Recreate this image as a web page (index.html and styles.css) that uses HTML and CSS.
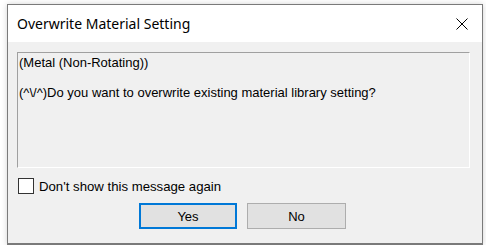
FILE: index.html
```html
<!DOCTYPE html>
<html>
<head>
<meta charset="utf-8" />
<title>Overwrite Material Setting</title>
<link rel="stylesheet" href="styles.css">
</head>
<body>

<div class="window">
  <div class="titlebar">
    <span class="title">Overwrite Material Setting</span>
    <svg class="close" width="12" height="12" viewBox="0 0 12 12">
      <path d="M0.5 0.5 L11.5 11.5 M11.5 0.5 L0.5 11.5" stroke="#000" stroke-width="1" fill="none" />
    </svg>
  </div>

  <div class="content">
    <div class="message">
      <p>(Metal (Non-Rotating))</p>
      <p>(^\/^)Do you want to overwrite existing material library setting?</p>
    </div>

    <label class="check">
      <span class="box"></span>
      <span>Don't show this message again</span>
    </label>

    <div class="buttons">
      <button class="btn default">Yes</button>
      <button class="btn">No</button>
    </div>
  </div>
</div>

</body>
</html>
```

FILE: styles.css
```css
body {
  margin: 0;
  padding: 4px 0 0 7px;
  background: #fff;
  font-family: "Liberation Sans", Arial, sans-serif;
}
.window {
  width: 474px;
  height: 238px;
  border: 1px solid #7a7a7a;
  border-bottom-width: 2px;
  box-shadow: 0 0 6px rgba(0,0,0,0.18);
  background: #f0f0f0;
  display: flex;
  flex-direction: column;
}
.titlebar {
  height: 37px;
  background: #fff;
  display: flex;
  align-items: center;
  padding: 0 0 0 9px;
}
.title {
  font-family: "Noto Sans", "Open Sans", sans-serif;
  font-size: 14px;
  color: #000;
  flex: 1;
  margin-top: -1px;
}
.close {
  margin-right: 14px;
}
.content {
  padding: 10px 0 0 9px;
}
.message {
  width: 450px;
  height: 114px;
  border: 1px solid;
  border-color: #a0a0a0 #fff #fff #a0a0a0;
  font-size: 13px;
  color: #000;
  padding: 0 0 0 1px;
}
.message p {
  margin: 3px 0 0 0;
  line-height: 14px;
}
.message p + p {
  margin-top: 16px;
}
.check {
  display: flex;
  align-items: center;
  margin: 10px 0 0 1px;
  font-size: 13.2px;
  color: #000;
}
.box {
  width: 14px;
  height: 14px;
  border: 1px solid #333;
  background: #fff;
  margin-right: 5px;
}
.buttons {
  display: flex;
  gap: 10px;
  margin: 9px 0 0 122px;
}
.btn {
  width: 99px;
  height: 26px;
  background: #e1e1e1;
  border: 1px solid #adadad;
  font-family: "Liberation Sans", Arial, sans-serif;
  font-size: 13px;
  color: #000;
  padding: 0;
}
.btn.default {
  width: 98px;
  border: 2px solid #0078d7;
}
```
